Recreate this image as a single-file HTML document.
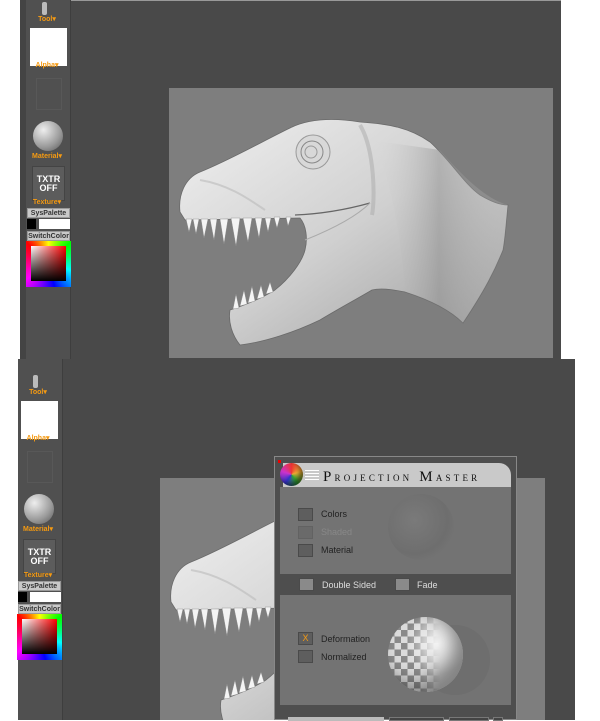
<!DOCTYPE html>
<html><head><meta charset="utf-8"><style>
*{margin:0;padding:0;box-sizing:border-box}
body{width:600px;height:720px;background:#fff;position:relative;overflow:hidden;font-family:"Liberation Sans",sans-serif}
.a{position:absolute}
.lbl{position:absolute;font-size:7px;font-weight:bold;color:#f59a12;width:54px;text-align:center;line-height:8px}
.btn{position:absolute;background:#c9c9c9;color:#333;font-size:7px;font-weight:bold;text-align:center;line-height:10px;height:10px;border:1px solid #999}
.cb{position:absolute;width:15px;height:13px;background:#5e5e5e;border:1px solid #4a4a4a}
.t{position:absolute;font-size:9px;color:#222;line-height:10px}
</style></head><body>
<svg width="0" height="0" style="position:absolute">
<defs>
<linearGradient id="hg" x1="0" y1="0" x2="1" y2="1"><stop offset="0" stop-color="#f0f0f0"/><stop offset=".5" stop-color="#d0d0d0"/><stop offset="1" stop-color="#9a9a9a"/></linearGradient>
<linearGradient id="ng" x1="0" y1="0" x2="1" y2="0"><stop offset="0" stop-color="#e0e0e0" stop-opacity="0"/><stop offset=".5" stop-color="#8a8a8a" stop-opacity=".45"/><stop offset="1" stop-color="#c8c8c8" stop-opacity=".2"/></linearGradient>
<g id="dino">
<path d="M180,212 C178,195 185,178 200,172 C230,160 265,140 290,128 C310,118 335,118 360,122 C390,124 410,128 430,142 C450,160 465,185 480,195 C492,202 500,205 508,205 C506,225 505,240 503,250 C495,270 485,290 463,323 C450,310 430,300 405,292 C390,289 380,288 372,290 C355,300 340,308 320,320 C295,332 265,342 240,345 C232,335 228,322 230,310 C245,305 262,298 275,290 C290,278 302,262 305,250 C308,238 306,225 300,218 L185,220 Z" fill="url(#hg)" stroke="#6a6a6a" stroke-width="0.8"/>
<path d="M370,140 C390,170 400,230 405,292 C430,300 450,310 463,323 C485,290 495,270 503,250 C505,240 506,225 508,205 C490,200 470,185 440,150 Z" fill="url(#ng)"/>
<path d="M295,215 C320,214 345,210 370,203" stroke="#666" stroke-width="1.2" fill="none"/>
<path d="M305,240 C330,230 355,218 370,203" stroke="#aaa" stroke-width="1" fill="none"/>
<circle cx="313" cy="152" r="17" fill="#d8d8d8" stroke="#999"/>
<circle cx="312" cy="152" r="11" fill="none" stroke="#888"/>
<circle cx="311" cy="152" r="6" fill="none" stroke="#999"/>
<path d="M360,125 C375,150 375,200 372,215" stroke="#aaa" stroke-width="4" fill="none" opacity=".5"/>
<path d="M200,180 C230,185 250,200 265,210" stroke="#bbb" stroke-width="2" fill="none" opacity=".6"/>
<g fill="#f4f4f4" stroke="#888" stroke-width=".4">
<path d="M186,219 L189,232 L192,219Z M193,219 L196,234 L199,219Z M201,219 L204,238 L208,219Z M210,219 L214,240 L217,219Z M220,219 L224,244 L228,219Z M231,218 L236,246 L240,218Z M243,218 L248,242 L252,218Z M255,218 L259,238 L262,218Z M265,218 L268,232 L271,218Z M274,217 L277,228 L280,217Z M286,217 L288,226 L291,217Z"/>
<path d="M233,309 L236,294 L239,308Z M240,306 L244,290 L247,304Z M248,303 L252,286 L255,301Z M257,299 L261,285 L264,297Z M266,294 L270,282 L273,292Z"/>
</g>
</g>
</defs></svg>

<!-- TOP -->
<div class="a" style="left:20px;top:0;width:541px;height:359px;background:#494949;border-top:1px solid #999"></div>
<div class="a" style="left:20px;top:0;width:6px;height:359px;background:#444"></div>
<div class="a" style="left:26px;top:0;width:45px;height:359px;background:#505050;border-right:1px solid #3e3e3e"></div>
<div class="a" style="left:169px;top:88px;width:384px;height:270px;background:#7e7e7e"></div>
<svg class="a" style="left:0;top:0" width="600" height="358"><use href="#dino"/></svg>

<!-- BOTTOM -->
<div class="a" style="left:18px;top:359px;width:557px;height:361px;background:#494949"></div>
<div class="a" style="left:18px;top:359px;width:45px;height:361px;background:#505050;border-right:1px solid #3e3e3e"></div>
<div class="a" style="left:160px;top:478px;width:385px;height:242px;background:#7e7e7e"></div>
<svg class="a" style="left:160px;top:478px" width="115" height="242"><g transform="translate(-169,-88)"><use href="#dino"/></g></svg>

<!-- left palettes -->
<div class="a" style="left:20px;top:0;width:54px;height:290px">
 <div class="a" style="left:22px;top:2px;width:5px;height:13px;background:#bbb;border-radius:2px"></div>
 <div class="lbl" style="left:0;top:16px">Tool▾</div>
 <div class="a" style="left:10px;top:28px;width:37px;height:38px;background:#fff"></div>
 <div class="lbl" style="left:0;top:62px">Alpha▾</div>
 <div class="a" style="left:16px;top:78px;width:26px;height:32px;border:1px solid #585858"></div>
 <div class="a" style="left:13px;top:121px;width:30px;height:30px;border-radius:50%;background:radial-gradient(circle at 35% 30%,#eee,#999 60%,#555)"></div>
 <div class="lbl" style="left:0;top:153px">Material▾</div>
 <div class="a" style="left:12px;top:166px;width:33px;height:35px;background:#5c5c5c;border:1px solid #444;color:#fff;font-weight:bold;font-size:9px;text-align:center;line-height:9px;padding-top:8px">TXTR<br>OFF</div>
 <div class="lbl" style="left:0;top:199px">Texture▾</div>
 <div class="btn" style="left:7px;top:208px;width:43px">SysPalette</div>
 <div class="a" style="left:7px;top:219px;width:9px;height:10px;background:#000"></div>
 <div class="a" style="left:19px;top:219px;width:31px;height:10px;background:#fff"></div>
 <div class="btn" style="left:7px;top:231px;width:43px">SwitchColor</div>
 <div class="a" style="left:6px;top:241px;width:45px;height:46px;background:conic-gradient(from -45deg,red,yellow 45deg,lime 90deg,cyan 150deg,blue 210deg,magenta 280deg,red 360deg)"></div>
 <div class="a" style="left:11px;top:246px;width:35px;height:35px;background:linear-gradient(to bottom,transparent,#000),linear-gradient(to right,#fff,red)"></div>
</div>
<div class="a" style="left:11px;top:373px;width:54px;height:290px">
 <div class="a" style="left:22px;top:2px;width:5px;height:13px;background:#bbb;border-radius:2px"></div>
 <div class="lbl" style="left:0;top:16px">Tool▾</div>
 <div class="a" style="left:10px;top:28px;width:37px;height:38px;background:#fff"></div>
 <div class="lbl" style="left:0;top:62px">Alpha▾</div>
 <div class="a" style="left:16px;top:78px;width:26px;height:32px;border:1px solid #585858"></div>
 <div class="a" style="left:13px;top:121px;width:30px;height:30px;border-radius:50%;background:radial-gradient(circle at 35% 30%,#eee,#999 60%,#555)"></div>
 <div class="lbl" style="left:0;top:153px">Material▾</div>
 <div class="a" style="left:12px;top:166px;width:33px;height:35px;background:#5c5c5c;border:1px solid #444;color:#fff;font-weight:bold;font-size:9px;text-align:center;line-height:9px;padding-top:8px">TXTR<br>OFF</div>
 <div class="lbl" style="left:0;top:199px">Texture▾</div>
 <div class="btn" style="left:7px;top:208px;width:43px">SysPalette</div>
 <div class="a" style="left:7px;top:219px;width:9px;height:10px;background:#000"></div>
 <div class="a" style="left:19px;top:219px;width:31px;height:10px;background:#fff"></div>
 <div class="btn" style="left:7px;top:231px;width:43px">SwitchColor</div>
 <div class="a" style="left:6px;top:241px;width:45px;height:46px;background:conic-gradient(from -45deg,red,yellow 45deg,lime 90deg,cyan 150deg,blue 210deg,magenta 280deg,red 360deg)"></div>
 <div class="a" style="left:11px;top:246px;width:35px;height:35px;background:linear-gradient(to bottom,transparent,#000),linear-gradient(to right,#fff,red)"></div>
</div>

<!-- Projection Master panel -->
<div class="a" style="left:274px;top:456px;width:243px;height:264px;background:#4e4e4e;border:1px solid #888"></div>
<div class="a" style="left:278px;top:460px;width:3px;height:3px;background:#e00"></div>
<div class="a" style="left:283px;top:463px;width:228px;height:24px;background:#c9c9c9;border-radius:0 12px 0 0"></div>
<div class="a" style="left:280px;top:463px;width:23px;height:23px;border-radius:50%;background:conic-gradient(#e33,#ea3,#3a3,#33c,#c3c,#e33);box-shadow:inset -3px -3px 5px rgba(0,0,0,.5)"></div>
<div class="a" style="left:305px;top:470px;width:14px;height:1px;background:#fff;box-shadow:0 3px #fff,0 6px #fff,0 9px #fff"></div>
<div class="a" style="left:323px;top:468px;font-family:'Liberation Serif',serif;font-size:15px;color:#111;letter-spacing:3.2px;line-height:18px">P<span style="font-size:9px">ROJECTION</span> M<span style="font-size:9px">ASTER</span></div>
<div class="a" style="left:280px;top:487px;width:231px;height:87px;background:#737373"></div>
<div class="a" style="left:388px;top:494px;width:66px;height:66px;border-radius:50%;background:radial-gradient(circle at 40% 40%,#7a7a7a,#6e6e6e 60%,#7c7c7c)"></div>
<div class="a" style="left:280px;top:595px;width:231px;height:110px;background:#737373"></div>
<div class="a" style="left:420px;top:625px;width:70px;height:70px;border-radius:50%;background:#6a6a6a;opacity:.6"></div>
<div class="a" style="left:388px;top:617px;width:75px;height:75px;border-radius:50%;background:radial-gradient(circle at 65% 35%,rgba(255,255,255,.8),rgba(255,255,255,0) 45%),linear-gradient(to right,rgba(200,200,200,0) 40%,#c8c8c8 70%),repeating-conic-gradient(#dcdcdc 0 25%,#8a8a8a 0 50%) 0 0/13px 13px;box-shadow:inset -10px -10px 16px rgba(0,0,0,.35)"></div>
<div class="cb" style="left:298px;top:508px"></div><div class="t" style="left:321px;top:509px">Colors</div>
<div class="cb" style="left:298px;top:526px;opacity:.4"></div><div class="t" style="left:321px;top:527px;color:#888">Shaded</div>
<div class="cb" style="left:298px;top:544px"></div><div class="t" style="left:321px;top:545px">Material</div>
<div class="cb" style="left:299px;top:578px;background:#8a8a8a"></div><div class="t" style="left:322px;top:580px;color:#ddd">Double Sided</div>
<div class="cb" style="left:395px;top:578px;background:#8a8a8a"></div><div class="t" style="left:417px;top:580px;color:#ddd">Fade</div>
<div class="cb" style="left:298px;top:632px;color:#f59a12;font-size:9px;text-align:center;line-height:11px">X</div><div class="t" style="left:321px;top:634px">Deformation</div>
<div class="cb" style="left:298px;top:650px"></div><div class="t" style="left:321px;top:652px">Normalized</div>
<div class="a" style="left:288px;top:717px;width:96px;height:4px;background:#bbb"></div>
<div class="a" style="left:389px;top:717px;width:55px;height:4px;background:#444;border:1px solid #777"></div>
<div class="a" style="left:449px;top:717px;width:40px;height:4px;background:#444;border:1px solid #777"></div>
<div class="a" style="left:493px;top:717px;width:10px;height:4px;background:#444;border:1px solid #777"></div>
</body></html>
